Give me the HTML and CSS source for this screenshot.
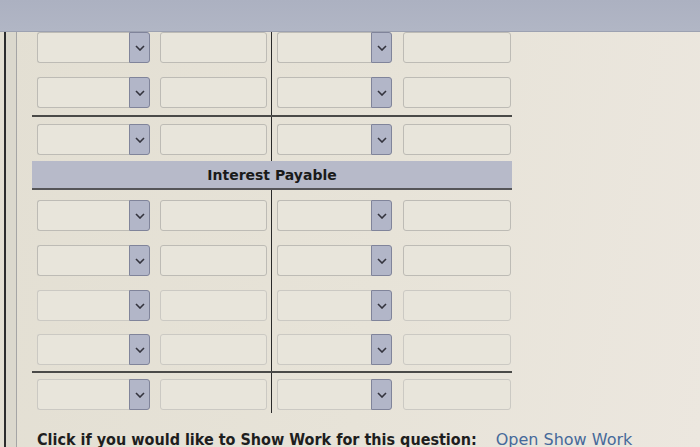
FILE: index.html
```html
<!DOCTYPE html>
<html>
<head>
<meta charset="utf-8">
<link rel="stylesheet" href="styles.css">
</head>
<body>
<div class="topbar"></div>
<div class="main">
  <div class="rail"></div>
  <div class="content">
    <div class="table">
      <div class="row r1">
        <div class="cell left"><div class="select"><div class="val"></div><div class="btn"><svg width="10" height="6" viewBox="0 0 10 6"><polyline points="1,1 5,5 9,1"/></svg></div></div><div class="input"></div></div>
        <div class="cell right"><div class="select"><div class="val"></div><div class="btn"><svg width="10" height="6" viewBox="0 0 10 6"><polyline points="1,1 5,5 9,1"/></svg></div></div><div class="input"></div></div>
      </div>
      <div class="row r2">
        <div class="cell left"><div class="select"><div class="val"></div><div class="btn"><svg width="10" height="6" viewBox="0 0 10 6"><polyline points="1,1 5,5 9,1"/></svg></div></div><div class="input"></div></div>
        <div class="cell right"><div class="select"><div class="val"></div><div class="btn"><svg width="10" height="6" viewBox="0 0 10 6"><polyline points="1,1 5,5 9,1"/></svg></div></div><div class="input"></div></div>
      </div>
      <div class="row r3 ruled">
        <div class="cell left"><div class="select"><div class="val"></div><div class="btn"><svg width="10" height="6" viewBox="0 0 10 6"><polyline points="1,1 5,5 9,1"/></svg></div></div><div class="input"></div></div>
        <div class="cell right"><div class="select"><div class="val"></div><div class="btn"><svg width="10" height="6" viewBox="0 0 10 6"><polyline points="1,1 5,5 9,1"/></svg></div></div><div class="input"></div></div>
      </div>
      <div class="header">Interest Payable</div>
      <div class="row b1">
        <div class="cell left"><div class="select"><div class="val"></div><div class="btn"><svg width="10" height="6" viewBox="0 0 10 6"><polyline points="1,1 5,5 9,1"/></svg></div></div><div class="input"></div></div>
        <div class="cell right"><div class="select"><div class="val"></div><div class="btn"><svg width="10" height="6" viewBox="0 0 10 6"><polyline points="1,1 5,5 9,1"/></svg></div></div><div class="input"></div></div>
      </div>
      <div class="row b2">
        <div class="cell left"><div class="select"><div class="val"></div><div class="btn"><svg width="10" height="6" viewBox="0 0 10 6"><polyline points="1,1 5,5 9,1"/></svg></div></div><div class="input"></div></div>
        <div class="cell right"><div class="select"><div class="val"></div><div class="btn"><svg width="10" height="6" viewBox="0 0 10 6"><polyline points="1,1 5,5 9,1"/></svg></div></div><div class="input"></div></div>
      </div>
      <div class="row b3">
        <div class="cell left"><div class="select"><div class="val"></div><div class="btn"><svg width="10" height="6" viewBox="0 0 10 6"><polyline points="1,1 5,5 9,1"/></svg></div></div><div class="input"></div></div>
        <div class="cell right"><div class="select"><div class="val"></div><div class="btn"><svg width="10" height="6" viewBox="0 0 10 6"><polyline points="1,1 5,5 9,1"/></svg></div></div><div class="input"></div></div>
      </div>
      <div class="row b4">
        <div class="cell left"><div class="select"><div class="val"></div><div class="btn"><svg width="10" height="6" viewBox="0 0 10 6"><polyline points="1,1 5,5 9,1"/></svg></div></div><div class="input"></div></div>
        <div class="cell right"><div class="select"><div class="val"></div><div class="btn"><svg width="10" height="6" viewBox="0 0 10 6"><polyline points="1,1 5,5 9,1"/></svg></div></div><div class="input"></div></div>
      </div>
      <div class="row b5 ruled">
        <div class="cell left"><div class="select"><div class="val"></div><div class="btn"><svg width="10" height="6" viewBox="0 0 10 6"><polyline points="1,1 5,5 9,1"/></svg></div></div><div class="input"></div></div>
        <div class="cell right"><div class="select"><div class="val"></div><div class="btn"><svg width="10" height="6" viewBox="0 0 10 6"><polyline points="1,1 5,5 9,1"/></svg></div></div><div class="input"></div></div>
      </div>
    </div>
    <div class="showwork"><span class="prompt">Click if you would like to Show Work for this question:</span><a class="link">Open Show Work</a></div>
  </div>
</div>
</body>
</html>
```
FILE: styles.css
```css
html, body {
  margin: 0;
  padding: 0;
  height: 100%;
  overflow: hidden;
}
body {
  background: linear-gradient(100deg, #e3dfd3 0%, #e7e3d8 55%, #ece7df 100%);
  font-family: "DejaVu Sans", Verdana, sans-serif;
  color: #1f1f1f;
}
.topbar {
  height: 32px;
  background: linear-gradient(180deg, #acb1c1 0%, #b1b6c5 100%);
  border-bottom: 1px solid #9ca1b1;
  box-sizing: border-box;
}
.main {
  display: flex;
  height: 415px;
}
.rail {
  width: 10px;
  margin-left: 4px;
  border-left: 2px solid #2c2c2e;
  border-right: 1px solid #a5a5a5;
  background: #dbd8cd;
  flex: none;
}
.content {
  padding-left: 15px;
}
.table {
  width: 480px;
}
.row {
  display: grid;
  grid-template-columns: 240px 240px;
}
.row.ruled {
  border-top: 2px solid #4a4a48;
}
.cell {
  display: flex;
  align-items: flex-start;
}
.cell.left {
  border-right: 1px solid #2a2a2a;
  padding-left: 5px;
  gap: 10px;
}
.cell.left .select { width: 113px; }
.cell.left .input { width: 107px; }
.cell.right {
  padding-left: 5px;
  gap: 11px;
}
.cell.right .select { width: 115px; }
.cell.right .input { width: 108px; }

.r1 .cell { padding-top: 0; padding-bottom: 7px; }
.r2 .cell { padding-top: 7px; padding-bottom: 7px; }
.r3 .cell { padding-top: 7px; padding-bottom: 6px; }
.b1 .cell { padding-top: 10px; padding-bottom: 7px; }
.b2 .cell { padding-top: 7px; padding-bottom: 7px; }
.b3 .cell { padding-top: 7px; padding-bottom: 6px; }
.b4 .cell { padding-top: 7px; padding-bottom: 6px; }
.b5 .cell { padding-top: 6px; padding-bottom: 3px; }

.select {
  display: flex;
  height: 31px;
}
.val {
  flex: 1;
  border: 1px solid #bdbbb5;
  border-right: none;
  border-radius: 3px 0 0 3px;
  background: #e8e5db;
}
.btn {
  width: 21px;
  box-sizing: border-box;
  border: 1px solid #80849a;
  border-radius: 0 3px 3px 0;
  background: #b2b6c8;
  display: flex;
  align-items: center;
  justify-content: center;
}
.btn svg polyline {
  fill: none;
  stroke: #34343e;
  stroke-width: 1.6;
}
.input {
  height: 31px;
  box-sizing: border-box;
  border: 1px solid #bdbbb5;
  border-radius: 3px;
  background: #e8e5db;
}
.b3 .val, .b3 .input, .b4 .val, .b4 .input, .b5 .val, .b5 .input {
  border-color: #cbc9c3;
}
.header {
  height: 27px;
  background: #b7bac9;
  border-bottom: 2px solid #555558;
  display: flex;
  align-items: center;
  justify-content: center;
  font-weight: bold;
  font-size: 14px;
  font-family: "DejaVu Sans", sans-serif;
  color: #1a1a1a;
}
.showwork {
  margin-top: 17px;
  padding-left: 5px;
  font-size: 16px;
  line-height: 20px;
  white-space: nowrap;
  display: flex;
  gap: 19px;
}
.prompt {
  font-weight: bold;
  font-family: "DejaVu Sans Condensed", "DejaVu Sans", sans-serif;
  color: #1e1e1e;
}
.link {
  color: #46699a;
  font-family: "DejaVu Sans", sans-serif;
}
```
